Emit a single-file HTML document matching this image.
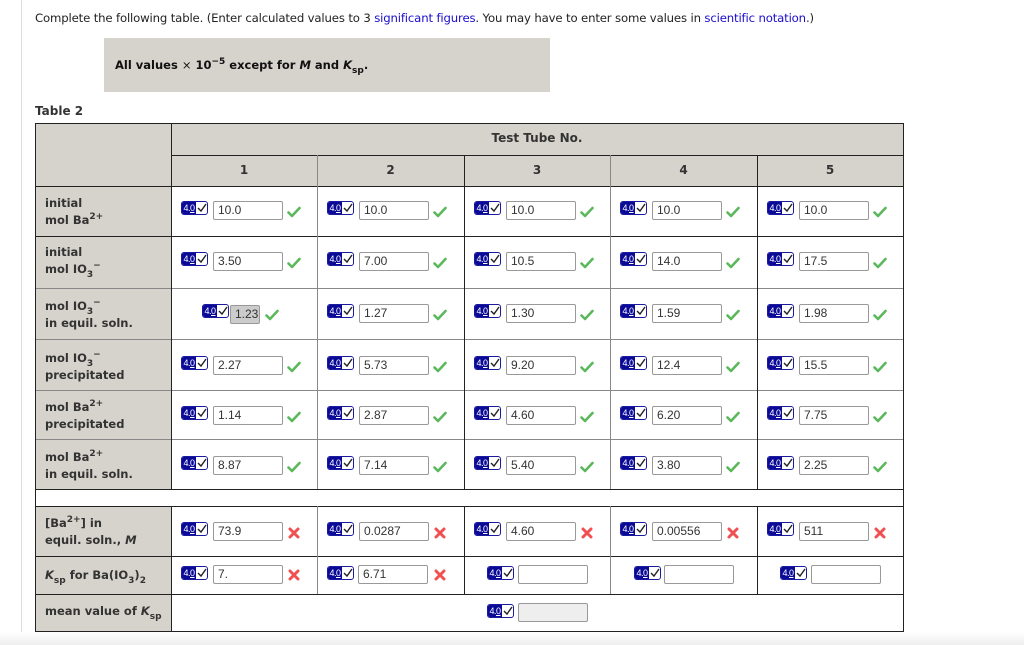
<!DOCTYPE html>
<html><head><meta charset="utf-8"><style>
body{margin:0;width:1024px;height:645px;background:#fff;position:relative;overflow:hidden;font-family:"DejaVu Sans",Verdana,sans-serif;color:#333}
.a{position:absolute}
.lbl{position:absolute;left:45px;font-weight:bold;font-size:11.5px;line-height:17px;color:#333}
sup{font-size:9px;vertical-align:5px;line-height:0}
sub{font-size:9px;vertical-align:-4px;line-height:0}
.bg{position:absolute;background:#d6d3cc}
.hl{position:absolute;height:1px}
.vl{position:absolute;width:1px}
.badge{position:absolute;width:27px;height:14px;border:1px solid #1a1aa0;border-radius:3px;background:#fff;overflow:hidden;box-sizing:border-box}
.badge i{position:absolute;left:0;top:0;width:14px;height:13px;background:#0a0a96;color:#fff;font-style:normal;font-family:"Liberation Sans",sans-serif;font-size:9px;line-height:12px;text-align:center;letter-spacing:-0.5px}
.badge svg{position:absolute;left:15px;top:1px}
.inp{position:absolute;width:70px;height:19px;border:1px solid #999;border-radius:2px;box-sizing:border-box;font-family:"Liberation Sans",sans-serif;font-size:12px;line-height:17px;padding-left:4px;color:#333;background:#fff}
.ok,.no{position:absolute}
</style></head><body>
<div class="vl" style="left:21px;top:0;height:645px;background:#ddd"></div>
<div class="a" style="left:35px;top:11px;font-size:11.7px;letter-spacing:-0.15px;font-family:'DejaVu Sans',sans-serif;color:#222">Complete the following table. (Enter calculated values to 3 <span style="color:#1a0dcc">significant figures</span>. You may have to enter some values in <span style="color:#1a0dcc">scientific notation</span>.)</div>
<div class="bg" style="left:104px;top:38px;width:446px;height:54px"></div>
<div class="a" style="left:115px;top:58px;font-size:11.5px;font-weight:bold;color:#111">All values <span style="font-weight:normal">×</span> 10<sup>−5</sup> except for <i>M</i> and <i>K</i><sub>sp</sub>.</div>
<div class="a" style="left:35px;top:104px;font-size:12px;font-weight:bold;color:#333">Table 2</div>
<div class="a" style="left:0;top:632px;width:1024px;height:13px;background:linear-gradient(#fff,#eee)"></div>
<div id="t"></div>
<script>
var h='';
function add(s){h+=s}
var cols=[171,317,464,610,757,903];
add('<div class="bg" style="left:35px;top:123px;width:868px;height:63px"></div>');
add('<div class="bg" style="left:35px;top:186px;width:136px;height:303px"></div>');
add('<div class="bg" style="left:35px;top:506px;width:136px;height:125px"></div>');
var rows=[186,236,288,339,390,439,489,506,556,594,631];
add('<div class="hl" style="left:35px;top:123px;width:869px;background:#222"></div>');
add('<div class="hl" style="left:171px;top:155px;width:732px;background:#222"></div>');
rows.forEach(function(y,i){var c=(i>=2&&i<=5)?'#888':'#222';add('<div class="hl" style="left:35px;top:'+y+'px;width:869px;background:'+c+'"></div>')});
add('<div class="vl" style="left:35px;top:123px;height:509px;background:#222"></div>');
add('<div class="vl" style="left:903px;top:123px;height:509px;background:#222"></div>');
function v(x,y1,y2,c){add('<div class="vl" style="left:'+x+'px;top:'+y1+'px;height:'+(y2-y1)+'px;background:'+c+'"></div>')}
v(171,123,489,'#222');v(171,506,632,'#222');
var vc=['#888','#222','#888','#222'];
for(var k=1;k<5;k++){v(cols[k],155,489,vc[k-1]);v(cols[k],506,594,vc[k-1]);}
add('<div class="a" style="left:171px;top:131px;width:732px;text-align:center;font-weight:bold;font-size:12px">Test Tube No.</div>');
for(var k=0;k<5;k++)add('<div class="a" style="left:'+cols[k]+'px;top:163px;width:'+(cols[k+1]-cols[k])+'px;text-align:center;font-weight:bold;font-size:12px">'+(k+1)+'</div>');
var labs=[[195,'initial<br>mol Ba<sup>2+</sup>'],[244,'initial<br>mol IO<sub>3</sub><sup>−</sup>'],[298,'mol IO<sub>3</sub><sup>−</sup><br>in equil. soln.'],[350,'mol IO<sub>3</sub><sup>−</sup><br>precipitated'],[399,'mol Ba<sup>2+</sup><br>precipitated'],[449,'mol Ba<sup>2+</sup><br>in equil. soln.'],[515,'[Ba<sup>2+</sup>] in<br>equil. soln., <i>M</i>'],[567,'<i>K</i><sub>sp</sub> for Ba(IO<sub>3</sub>)<sub>2</sub>'],[603,'mean value of <i>K</i><sub>sp</sub>']];
labs.forEach(function(l){add('<div class="lbl" style="top:'+l[0]+'px">'+l[1]+'</div>')});
var bchk='<svg width="10" height="10" viewBox="0 0 10 10"><path d="M1 5 L4 8 L9 1" stroke="#222" stroke-width="1.4" fill="none"/></svg>';
function badge(x,y){add('<div class="badge" style="left:'+x+'px;top:'+y+'px"><i>4.<u>0</u></i>'+bchk+'</div>')}
function inp(x,y,t,w,bg){add('<div class="inp" style="left:'+x+'px;top:'+y+'px;'+(w?'width:'+w+'px;':'')+(bg?'background:'+bg+';':'')+'">'+t+'</div>')}
function ok(x,y){add('<svg class="ok" style="left:'+x+'px;top:'+y+'px" width="14" height="12" viewBox="0 0 14 12"><path d="M1.5 6.5 L5 10 L12.5 2" stroke="#5cb85c" stroke-width="2.6" fill="none" stroke-linecap="round" stroke-linejoin="round"/></svg>')}
function no(x,y){add('<svg class="no" style="left:'+x+'px;top:'+y+'px" width="12" height="12" viewBox="0 0 12 12"><path d="M2 2 L10 10 M10 2 L2 10" stroke="#f05050" stroke-width="3" fill="none" stroke-linecap="round"/></svg>')}
var data=[['10.0','10.0','10.0','10.0','10.0'],['3.50','7.00','10.5','14.0','17.5'],['1.23','1.27','1.30','1.59','1.98'],['2.27','5.73','9.20','12.4','15.5'],['1.14','2.87','4.60','6.20','7.75'],['8.87','7.14','5.40','3.80','2.25'],['73.9','0.0287','4.60','0.00556','511']];
var iy=[201,252,304,356,406,456,522];
for(var r=0;r<7;r++){for(var k=0;k<5;k++){var c=cols[k];var y=iy[r];
 if(r==2&&k==0){badge(202,y);inp(230,y+1,'1.23',30,'#ccc');ok(265,y+5);continue}
 badge(c+10,y);inp(c+42,y,data[r][k]);
 if(r==6)no(c+117,y+5);
 else ok(c+116,y+5);}}
badge(181,566);inp(213,565,'7.');no(288,569);
badge(327,566);inp(358,565,'6.71');no(434,569);
badge(487,566);inp(518,565,'');badge(634,566);inp(664,565,'');badge(780,566);inp(811,565,'');
badge(487,604);inp(518,603,'',70,'#eee');
document.getElementById('t').innerHTML=h;
</script>
</body></html>
